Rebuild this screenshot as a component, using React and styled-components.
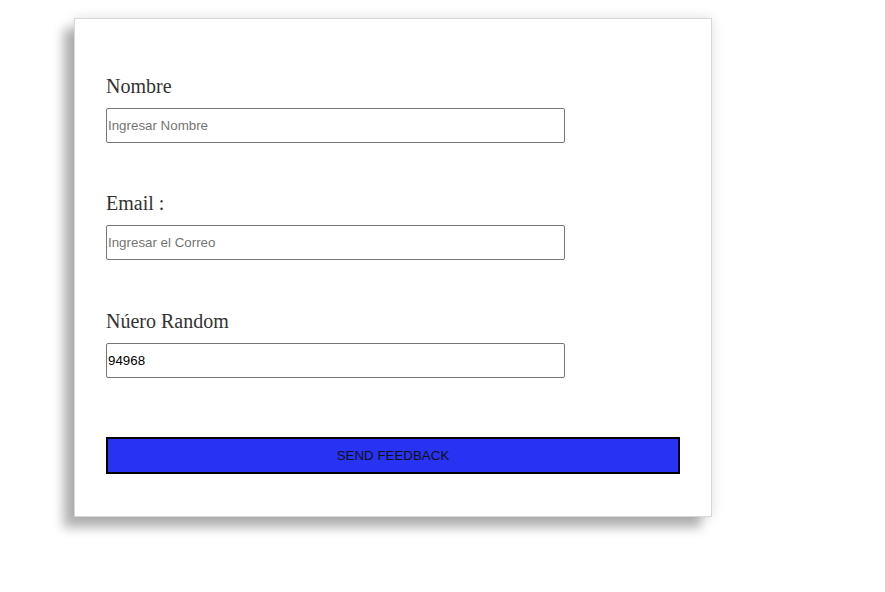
import React from "react";
import styled, { createGlobalStyle } from "styled-components";

const Global = createGlobalStyle`
  html, body { margin: 0; padding: 0; background: #fff; }
  body { font-family: "Liberation Serif", "Times New Roman", serif; }
`;

const Page = styled.div`
  padding: 18px 0 60px 74px;
`;

const Card = styled.form`
  box-sizing: border-box;
  width: 638px;
  height: 499px;
  padding: 56px 32px 42px;
  background: #fff;
  border: 1px solid #d8d8d8;
  box-shadow: -11px 11px 10px rgba(0, 0, 0, 0.28), 0 0 12px rgba(0, 0, 0, 0.13);
  display: flex;
  flex-direction: column;
`;

const Field = styled.div`
  display: flex;
  flex-direction: column;
  margin-bottom: ${(p) => p.$gap}px;
`;

const Label = styled.label`
  font-family: "Liberation Serif", "Times New Roman", serif;
  font-size: 20px;
  line-height: 23px;
  color: #333;
  margin: 0 0 10px -1px;
`;

const Input = styled.input`
  box-sizing: border-box;
  width: 459px;
  height: 35px;
  margin: 0 0 0 -1px;
  padding: 1px 1px;
  border: 1px solid #767676;
  border-radius: 2px;
  font-family: "Liberation Sans", Arial, sans-serif;
  font-size: 13.33px;
  color: #000;
  background: #fff;
  outline: none;
  &::placeholder {
    color: #757575;
  }
`;

const Button = styled.button`
  box-sizing: border-box;
  width: 574px;
  height: 38px;
  margin-left: -1px;
  border: 2px solid #000;
  background: #2832f2;
  color: #111;
  font-family: "Liberation Sans", Arial, sans-serif;
  font-size: 13.33px;
  text-transform: uppercase;
  cursor: pointer;
`;

export default function App() {
  return (
    <>
      <Global />
      <Page>
        <Card onSubmit={(e) => e.preventDefault()}>
          <Field $gap={49}>
            <Label>Nombre</Label>
            <Input placeholder="Ingresar Nombre" />
          </Field>
          <Field $gap={50}>
            <Label>Email :</Label>
            <Input placeholder="Ingresar el Correo" />
          </Field>
          <Field $gap={59}>
            <Label>Núero Random</Label>
            <Input defaultValue="94968" />
          </Field>
          <Button type="submit">Send Feedback</Button>
        </Card>
      </Page>
    </>
  );
}
